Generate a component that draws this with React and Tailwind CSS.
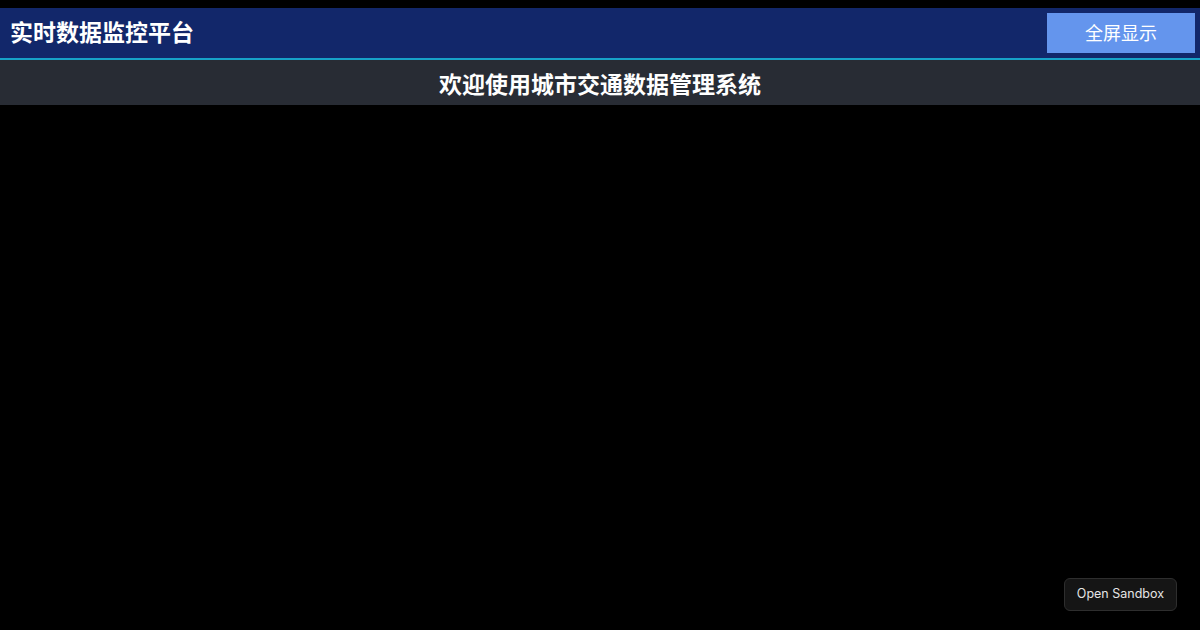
export default function App() {
  const cjk = { fontFamily: '"DejaVu Sans", "Noto Sans CJK SC", sans-serif' }

  return (
    <div className="min-h-screen w-full bg-black pt-2" style={cjk}>
      <header className="flex h-[52px] items-center justify-between border-b-2 border-[#17a2c8] bg-[#12276a] pl-[10px] pr-[5px]">
        <h1 className="text-[23px] font-bold leading-none text-white">实时数据监控平台</h1>
        <button className="flex h-10 w-[148px] items-center justify-center bg-[#6495ed] text-[18px] text-white">
          全屏显示
        </button>
      </header>

      <div className="flex h-[45px] items-center justify-center bg-[#282c34] pt-[6px]">
        <h2 className="text-[23px] font-bold leading-none text-white">欢迎使用城市交通数据管理系统</h2>
      </div>

      <button
        className="fixed bottom-[19px] right-[23px] rounded-md border border-[#2e2e2e] bg-[#151515] px-3 py-[6px] text-[12.5px] text-[#e5e5e5]"
        style={{ fontFamily: 'Inter, "Liberation Sans", sans-serif' }}
      >
        Open Sandbox
      </button>
    </div>
  )
}
